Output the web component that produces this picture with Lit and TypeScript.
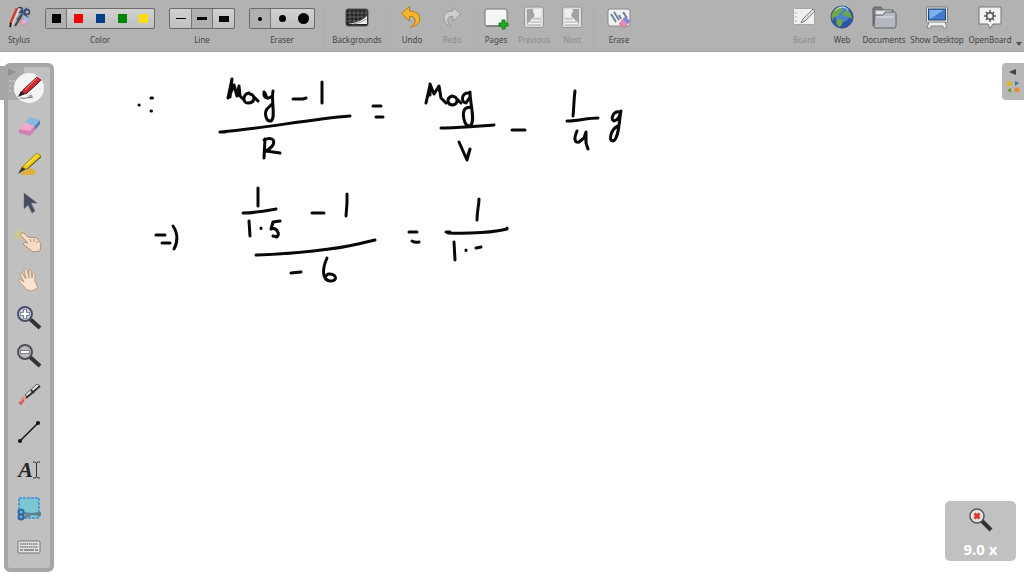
import { LitElement, html, css, svg, SVGTemplateResult } from "lit";
import { customElement, property } from "lit/decorators.js";
import { classMap } from "lit/directives/class-map.js";

const icons: Record<string, SVGTemplateResult> = {
  stylus: svg`
    <path d="M10 14 20 2M21 12 13 4" stroke="#51658c" stroke-width="2"/>
    <circle cx="13" cy="4" r="2.5" fill="none" stroke="#33466f" stroke-width="1.5"/>
    <circle cx="20" cy="6" r="2.5" fill="none" stroke="#33466f" stroke-width="1.5"/>
    <path d="M3 19 11 2" stroke="#ddd" stroke-width="5"/><path d="M3 18 10 2" stroke="#c8453f" stroke-width="3"/>
    <path d="M8 20 15 9" stroke="#444" stroke-width="2"/><path d="m3 21 1-4" stroke="#222" stroke-width="2"/>
    <path d="m13 16 5-5 4 3-5 6z" fill="#e8a8d0" stroke="#b37ba5" stroke-width=".7"/><path d="m16 12 2-2 5 3-2 3z" fill="#9fbde4"/>`,
  backgrounds: svg`<rect x="1" y="3" width="22" height="17" rx="2" fill="#222" stroke="#555"/>
    <path d="M5 4v14M9 4v14M13 4v14M17 4v14M21 4v14M2 7h20M2 11h20M2 15h20" stroke="#777" stroke-width=".7"/>
    <path d="M3 18c7-1 14-3 19-8v8z" fill="#eee"/><path d="M8 18c6-1 10-3 14-5" stroke="#999" fill="none"/>`,
  undo: svg`<path d="M1.500 7.500 9.500 .5V5c7 0 11 4 10 9-.5 4-4 6.500-9 7 3-2 5-4 4.500-7C14.500 11 13 10 9.500 10.500V15z" fill="#f7b52e" stroke="#b57a13" stroke-linejoin="round"/>`,
  redo: svg`<path d="M21 8 13 1.500V5C6 5 3 9 4 13c.5 4 3 6 7 7-3-3-4-5-3-7 .5-2 2-3 5-2.500V15z" fill="#cecece" stroke="#999" stroke-linejoin="round"/>`,
  pages: svg`<rect x="1" y="3" width="22" height="17" rx="2" fill="#f5f5f5" stroke="#777"/>
    <path d="M2 20h20" stroke="#777" stroke-width="1.500"/><path d="M18 14h3v3h3v3h-3v3h-3v-3h-3v-3h3z" fill="#20ad20" stroke="#16801a"/>`,
  previous: svg`<rect x="2.500" y="1" width="19" height="20.500" rx="2" fill="#dedede" stroke="#949494"/>
    <path d="M5 3h7c-3 3 3 5 0 8L5 18z" fill="#a2a2a2"/><path d="M12 3h7v8h-7c3-3-3-5 0-8z" fill="#efefef"/><path d="M11 12h8v7H5z" fill="#f2f2f2"/><path d="M11 13h8M8 16h11M5 19h14" stroke="#a5a5a5"/>`,
  next: svg`<rect x="2.500" y="1" width="19" height="20.500" rx="2" fill="#dedede" stroke="#949494"/>
    <path d="M19 3h-7c3 3-3 5 0 8l7 7z" fill="#a2a2a2"/><path d="M12 3H5v8h7c-3-3 3-5 0-8z" fill="#efefef"/><path d="M13 12H5v7h14z" fill="#f2f2f2"/><path d="M13 13H5M16 16H5M19 19H5" stroke="#a5a5a5"/>`,
  erase: svg`<rect x="1" y="3" width="22" height="17" rx="2" fill="#f1f1f1" stroke="#888"/>
    <path d="m4 8 5 8M7 6l5 8M12 9l2 4M16 6l4 6" stroke="#71829e" stroke-width="2"/>
    <path d="m12 18 6-7 5 4-6 7z" fill="#ea86bd" stroke="#b76996" stroke-width=".6"/><path d="m16 13 2-2 5 4-2 3z" fill="#6c90d4"/>`,
  board: svg`<rect x="1.500" y="2.500" width="21" height="16" rx="1" fill="#f0f0f0" stroke="#a6a6a6"/>
    <path d="M4 6v2M4 10v2M4 14v2" stroke="#aaa"/><path d="m9 17 2-4L21 3l2 2-10 10z" fill="#ddd" stroke="#808080"/>`,
  web: svg`<circle cx="12" cy="11" r="11" fill="#2856aa" stroke="#384d78"/>
    <circle cx="12" cy="8" r="8" fill="#4b83cf"/>
    <path d="M3 6c2-3 5-5 8-5l2 3-3 3-2 3-4 1-1 4C1 12 1 9 3 6zM12 8l5-4 4 4 1 5-4-2-3-1zM7 13l6 1-1 5-3 2-3-4z" fill="#70a845"/>
    <path d="M5 5c4-5 10-5 13-1" stroke="#dbe9f4" fill="none"/>`,
  documents: svg`<path d="M1 20V2l2-1h6l2 3h10v4" fill="#777b80" stroke="#62666b"/><path d="M3 18V4h17v5" fill="#e2e3e6" stroke="#777"/>
    <path d="M2 21 3 9h8l2-3h10l1 1v13l-1 2H3z" fill="#b4b7be" stroke="#62656c"/><path d="M4 11h18" stroke="#e4e5e8"/>`,
  desktop: svg`<rect x="1.500" y="1" width="21" height="15.500" rx="1" fill="#e9e9e9" stroke="#777"/>
    <rect x="3.500" y="3" width="17" height="11" fill="#3f7acb" stroke="#23466f"/><path d="M4 4h15L5 13z" fill="#7eb1ec"/>
    <path d="m2 22 2-6h16l2 6h-4v-2H6v2z" fill="#eee" stroke="#888"/>`,
  openboard: svg`<path d="M1 1h22v17h-8l-3 4.500L10 18H1z" fill="#f3f3f3" stroke="#777"/>
    <g stroke="#555" stroke-width="1.500"><path d="M12 4v12M6 10h12M8 6l8 8M16 6l-8 8"/></g><circle cx="12" cy="10" r="4" fill="#555"/><circle cx="12" cy="10" r="2.500" fill="#eee"/>`,
  pen: svg`<circle cx="12" cy="12" r="15" fill="#f4f4f4"/>
    <path d="M3 19 6 14 20 1l4 3L10 17z" fill="#d9272b" stroke="#8e1519"/><path d="m8 14 12-12" stroke="#f58a85"/><path d="m1 21 3-6 4 3z" fill="#222"/><path d="M9 18 24 4" stroke="#333"/>
    <path d="M3 22c5 1 12-1 12-2s-4 0-4 1 3 1 5 0" stroke="#777" fill="none"/>`,
  eraser: svg`<path d="m2 15 9-9 9 3-7 11-11-2z" fill="#f2a9cd"/><path d="m8 8 5-5 10 3-5 7z" fill="#86b9dd"/><path d="m2 15 11 2v5L2 19zM13 17l5-6v5l-5 6z" fill="#d184b4"/><path d="m18 12 5-6v4l-5 6z" fill="#5279b3"/>`,
  marker: svg`<path d="m4 20 9-5 6 3-2 4H4z" fill="#e0ae3d"/><path d="M3 18 7 12 20 0l4 3L10 16z" fill="#f0cc12" stroke="#a88b12"/><path d="m9 12 12-10" stroke="#ffef76"/><path d="m1 21 4-7 4 2z" fill="#3e3b2d"/><path d="M10 16 24 4" stroke="#4b4520"/>`,
  select: svg`<path d="M7 2v16l4-4 4 8 3-2-4-8h6z" fill="#474b60" stroke="#656a7c" stroke-width=".5"/>`,
  interact: svg`<path d="M-3 4 8 6M0 10l5-9M-3 8 8 3M0 0l4 11" stroke="#d7d764"/>
    <path d="M5 4c-2 0-2 2-1 3l7 7-3-1-2 2 5 4 5 4 7-1 1-7-4-6-9-1-4-4z" fill="#f7dcc5" stroke="#b18d76"/><path d="m13 10 1 3M17 10v3M20 12v2" stroke="#b18d76"/>`,
  hand: svg`<path d="m8 21-6-7c-1-2 1-2 2-1l3 2-4-8c0-2 2-2 2-1l4 6-2-9c0-2 2-2 3 0l2 8V3c0-1 2-1 2 0l1 8 1-5c1-1 2 0 2 1v7l3 7-6 3c-3 0-5-1-7-3z" fill="#f9e2cf" stroke="#b99880"/>`,
  zoomIn: svg`<path d="m13 13 10 9" stroke="#333" stroke-width="4"/><circle cx="8" cy="8" r="7" fill="#ccd" stroke="#45506a" stroke-width="2"/><path d="M8 3.500v9M3.500 8h9" stroke="#45506a" stroke-width="4"/><path d="M8 4v8M4 8h8" stroke="#fff" stroke-width="2.500"/>`,
  zoomOut: svg`<path d="m13 13 10 9" stroke="#333" stroke-width="4"/><circle cx="8" cy="8" r="7" fill="#bbb" stroke="#4b4e56" stroke-width="2"/><path d="M3.500 8h9" stroke="#555" stroke-width="4"/><path d="M4 8h8" stroke="#fff" stroke-width="2.500"/>`,
  pointer: svg`<path d="m8 13 12-11 3 2-12 11z" fill="#ececec" stroke="#555"/><path d="m9 16 14-12" stroke="#333" stroke-width="2"/><path d="m14 8 3 3" stroke="#333" stroke-width="2"/><path d="m3 20 5-5" stroke="#e58a84" stroke-width="3"/><path d="m2 20 2 2 3-4" stroke="#d0524c" stroke-width="1.500"/>`,
  line: svg`<path d="M3 21 21 3" stroke="#111" stroke-width="1.500"/><circle cx="3" cy="21" r="2" fill="#111"/><circle cx="21" cy="3" r="2" fill="#111"/>`,
  capture: svg`<rect x="2" y="1" width="20" height="20" fill="#7cc8d0" stroke="#4389d5" stroke-dasharray="3 1" stroke-width="1.500"/>
    <path d="m6 16 17 2v-2l-8 1-9 4" fill="#999" stroke="#5d7f91" stroke-width="2"/><circle cx="4" cy="15" r="2.500" fill="none" stroke="#3565a5" stroke-width="2"/><circle cx="4" cy="20" r="2.500" fill="none" stroke="#3565a5" stroke-width="2"/>`,
  keyboard: svg`<rect x="1" y="6" width="22" height="12" rx="1" fill="#e2e2e2" stroke="#777"/><path d="M3 9h18M3 12h18" stroke="#777" stroke-width="1.500" stroke-dasharray="1.500 .7"/><path d="M3 15h3M7 15h10M18 15h3" stroke="#777" stroke-width="1.500"/>`,
  resetZoom: svg`<path d="m13 13 9 9" stroke="#333" stroke-width="4"/><circle cx="8" cy="8" r="7" fill="#e4e4e4" stroke="#4d5961" stroke-width="1.500"/><path d="m5.500 5.500 5 5M10.500 5.500l-5 5" stroke="#e0352b" stroke-width="3"/>`,
};

const icon = (name: string) => html`<svg class="icon" viewBox="0 0 24 24" fill="none" aria-hidden="true">${icons[name]}</svg>`;

/* Pen strokes on the page, each one a run of x,y samples. */
const strokes: string[] = [
  "M139 105h.2M151 98h1.500M151 111h.5",
  "M228 98L232 79L230 97M229 97L234 85L237 96L239 86L240 96L243 99",
  "M249 93C243 94 242 103 248 103C255 103 256 95 250 94M254 97L258 101",
  "M264 92C263 98 268 100 272 96M273 91C271 101 276 118 271 121C266 122 264 113 267 109L272 104M265 93L267 98",
  "M293 99H303L306 98M322 82V103M220 132H225M221 132C260 129 310 119 350 116",
  "M265 139L264 158M264 140C275 135 278 144 266 151L280 153M373 106H381M376 117H383",
  "M426 103L430 85L430 95M430 84L434 94L439 86L441 98L446 103",
  "M452 96C446 98 447 105 453 105C459 103 458 97 452 96M457 99L461 103",
  "M469 93C462 92 460 102 466 103L470 97L470 92C470 104 476 122 470 126C464 127 461 112 466 108L471 107",
  "M441 128H445C465 127 478 126 494 125M459 142L467 160L470 149L467 158M512 130H525",
  "M575 91C574 98 574 106 573 116M567 121C578 121 587 118 598 118M577 131C574 138 574 143 579 142L584 138L586 132V143L588 149",
  "M620 112C613 110 610 120 614 121C619 120 620 115 621 111C619 121 619 139 613 141C608 141 611 129 618 126",
  "M156 235H165M162 243H170M173 226C178 233 178 242 174 249",
  "M258 188V206M243 213C255 213 265 211 276 209M249 221L250 236M261 228V228.500M280 221L273 222L271 229C277 227 280 234 277 237L273 236",
  "M312 213H324M347 194L347 203L346 216M256 255H258C292 254 338 249 358 244L375 240",
  "M291 273L301 272M327 258C322 269 322 280 330 281C339 281 336 273 328 274L325 277",
  "M409 232H417M412 241Q415 243 419 242M479 199C479 205 477 211 477 220",
  "M446 232H450M448 233C470 234 496 232 507 229L507 228M454 242L455 260M466 250V250.500M476 248L481 247",
];

@customElement("tool-button")
export class ToolButton extends LitElement {
  @property() label = "";
  @property() icon = "";
  @property({ type: Boolean }) off = false;
  static styles = css`
    :host { display: block; }
    button { width: 100%; padding: 0; border: 0; background: none; display: flex; flex-direction: column; align-items: center; gap: 4px;
      font: 8px/12px "Noto Sans", sans-serif; color: #444; white-space: nowrap; }
    .off { color: #8d8d8d; }
    .icon { width: 24px; height: 24px; display: block; overflow: visible; }
  `;
  render() {
    return html`<button class=${classMap({ off: this.off })} ?disabled=${this.off}>${icon(this.icon)}<span>${this.label}</span></button>`;
  }
}

@customElement("app-root")
export class AppRoot extends LitElement {
  static styles = css`
    * { box-sizing: border-box; }
    :host { display: flex; flex-direction: column; height: 100vh; overflow: hidden; background: #fff; font: 8px/12px "Noto Sans", sans-serif; color: #444; }
    button { padding: 0; border: 0; background: none; color: inherit; font: inherit; }
    .icon { width: 24px; height: 24px; display: block; overflow: visible; }
    .bar { display: flex; align-items: flex-start; height: 52px; padding-top: 6px; background: #b2b2b2; border-bottom: 1px solid #a2a2a2; flex: none; }
    .group { display: flex; align-items: flex-start; padding: 0 2px; border-right: 1px solid #adadad; height: 42px; }
    .group.first { padding: 0 9px 0 0; gap: 14px; }
    .group.last { border: 0; }
    .spacer { flex: 1; }
    .w-s { width: 38px; } .w-m { width: 40px; } .w-l { width: 46px; } .w-xl { width: 60px; }
    .start { display: flex; gap: 7px; }
    .choice { display: flex; flex-direction: column; align-items: center; gap: 5px; padding-top: 2px; }
    .segments { display: flex; height: 21px; border: 1px solid #6a6a6a; border-radius: 2px; background: linear-gradient(#d2d2d2, #bebebe); }
    .segment { width: 22px; display: grid; place-items: center; }
    .segment:first-child, .segment:last-child { width: 21px; }
    .segment.on { background: #b0b0b0; }
    .rule { border-left: 1px solid #777; }
    .rule-end { border-right: 1px solid #777; }
    .swatch { display: block; width: 9px; height: 9px; }
    .black { background: #000; } .red { background: #f00; } .blue { background: #003f87; } .green { background: #008400; } .yellow { background: #ffde00; }
    .mark { display: block; background: #000; }
    .thin { width: 10px; height: 1px; } .mid { width: 10px; height: 3px; } .thick { width: 10px; height: 6px; }
    .dot { border-radius: 50%; }
    .small { width: 4px; height: 4px; } .medium { width: 7px; height: 7px; } .large { width: 11px; height: 11px; }
    .more { width: 11px; height: 42px; display: flex; align-items: flex-end; justify-content: center; padding-bottom: 2px; }
    .page { position: relative; flex: 1; min-height: 0; overflow: hidden; }
    .ink { display: block; width: 1024px; height: 524px; fill: none; stroke: #080808; stroke-width: 3; stroke-linecap: round; stroke-linejoin: round; }
    .tab { position: absolute; top: 14px; left: 0; width: 24px; height: 34px; background: #a5a5a5; padding: 0; display: block; }
    .palette { position: absolute; top: 11px; bottom: 4px; left: 4px; width: 50px; padding: 2px 0; display: flex; flex-direction: column; background: rgba(171, 171, 171, .75); border: 4px solid #a6a6a6; border-radius: 6px; }
    .tool { flex: 1; min-height: 0; display: grid; place-items: center; }
    .type { font: italic bold 22px/24px "Liberation Serif", serif; color: #222; display: flex; align-items: center; }
    .library { position: absolute; top: 11px; right: 0; width: 22px; height: 37px; background: #b8b8b8; border-radius: 4px 0 0 4px; display: grid; place-items: center; }
    .zoom { position: absolute; right: 8px; bottom: 15px; width: 71px; height: 60px; background: #c1c1c1; border-radius: 5px; display: flex; flex-direction: column; align-items: center; justify-content: space-between; padding: 7px 0 4px; font: bold 15px/16px "Noto Sans", sans-serif; color: #fff; }
  `;

  private tools = [
    ["Pen", "pen"], ["Eraser", "eraser"], ["Marker", "marker"], ["Select", "select"], ["Interact", "interact"], ["Scroll page", "hand"],
    ["Zoom in", "zoomIn"], ["Zoom out", "zoomOut"], ["Laser pointer", "pointer"], ["Draw line", "line"], ["Write text", "text"],
    ["Capture", "capture"], ["Keyboard", "keyboard"],
  ];

  private segments(label: string, kind: string, names: string[], active: number) {
    return html`<div class="choice"><div class="segments" role="group" aria-label=${label}>
      ${names.map((n, i) => html`<button aria-label="${label} ${n}" aria-pressed=${i === active ? "true" : "false"}
        class=${classMap({ segment: true, on: i === active, rule: i === active && i > 0, "rule-end": i === active })}><span class="${kind} ${n}"></span></button>`)}
    </div><span>${label}</span></div>`;
  }

  render() {
    return html`
      <header class="bar">
        <div class="group first">
          <div class="start"><tool-button class="w-s" label="Stylus" icon="stylus"></tool-button>
          ${this.segments("Color", "swatch", ["black", "red", "blue", "green", "yellow"], 0)}</div>
          ${this.segments("Line", "mark", ["thin", "mid", "thick"], 1)}
          ${this.segments("Eraser", "mark dot", ["small", "medium", "large"], 0)}
        </div>
        <div class="group"><tool-button class="w-xl" label="Backgrounds" icon="backgrounds"></tool-button></div>
        <div class="group"><tool-button class="w-m" label="Undo" icon="undo"></tool-button><tool-button class="w-m" label="Redo" icon="redo" off></tool-button></div>
        <div class="group"><tool-button class="w-s" label="Pages" icon="pages"></tool-button><tool-button class="w-s" label="Previous" icon="previous" off></tool-button><tool-button class="w-s" label="Next" icon="next" off></tool-button></div>
        <div class="group last"><tool-button class="w-l" label="Erase" icon="erase"></tool-button></div>
        <span class="spacer"></span>
        <tool-button class="w-s" label="Board" icon="board" off></tool-button>
        <tool-button class="w-s" label="Web" icon="web"></tool-button>
        <tool-button class="w-l" label="Documents" icon="documents"></tool-button>
        <tool-button class="w-xl" label="Show Desktop" icon="desktop"></tool-button>
        <tool-button class="w-l" label="OpenBoard" icon="openboard"></tool-button>
        <button class="more" aria-label="More"><svg width="6" height="4" viewBox="0 0 6 4"><path d="M0 0h6L3 4z" fill="#555"/></svg></button>
      </header>
      <main class="page">
        <svg class="ink" viewBox="0 52 1024 524" role="img" aria-label="Handwritten lens equation">${strokes.map((d) => svg`<path d=${d}/>`)}</svg>
        <button class="tab" aria-label="Page list"><svg width="24" height="34" viewBox="0 0 24 34"><path d="m8 2 8 4-8 4z" fill="#444"/><path d="M9 15h6M9 20h2M9 25h2M13 20h6M13 25h6" stroke="#ddd" stroke-width="2"/></svg></button>
        <nav class="palette" aria-label="Tools">
          ${this.tools.map(([label, name]) => html`<button class="tool" aria-label=${label}>
            ${name === "text" ? html`<span class="type">A<svg width="7" height="18" viewBox="0 0 7 18" fill="none"><path d="M0 1h2l1.500 1L5 1h2M3.500 2v14M0 17h2l1.500-1L5 17h2" stroke="#333"/></svg></span>` : icon(name)}
          </button>`)}
        </nav>
        <button class="library" aria-label="Library"><svg width="22" height="37" viewBox="0 0 22 37">
          <path d="m14 6v6l-7-3z" fill="#444"/><path d="M5 18h4l1 2v3H5z" fill="#d9b72a"/><path d="m13 18 4 2-4 3z" fill="#2f7f9e"/><path d="m9 25v5l-4-3z" fill="#6f9b2e"/><circle cx="15" cy="27" r="2.500" fill="#ed8a31"/></svg></button>
        <button class="zoom" aria-label="Reset zoom, 9.0 x">${icon("resetZoom")}<span>9.0 x</span></button>
      </main>`;
  }
}
